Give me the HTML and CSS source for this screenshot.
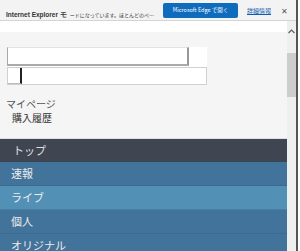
FILE: index.html
```html
<!DOCTYPE html>
<html lang="ja">
<head>
<meta charset="utf-8">
<title>マイページ</title>
<link rel="stylesheet" href="styles.css">
</head>
<body>
<div class="window">
  <div class="main">
    <div class="infobar">
      <span class="msg"><span class="ie">Internet Explorer モ</span><span class="jp">ードになっています。ほとんどのペ…</span></span>
      <span class="btn">Microsoft Edge で開く</span>
      <span class="link">詳細情報</span>
      <span class="close">✕</span>
    </div>
    <div class="viewport">
      <div class="page">
        <div class="header"></div>
        <div class="content">
          <div class="form">
            <div class="row1"><div class="field1"></div></div>
            <div class="field2"><div class="smallbtn"></div></div>
          </div>
          <div class="mypage">マイページ</div>
          <div class="history">購入履歴</div>
          <ul class="nav">
            <li class="dark">トップ</li>
            <li>速報</li>
            <li class="light">ライブ</li>
            <li>個人</li>
            <li>オリジナル</li>
          </ul>
        </div>
      </div>
      <div class="scrollbar">
        <div class="arrow">
          <svg width="7" height="5" viewBox="0 0 7 5"><path d="M0.5 4 L3.5 1 L6.5 4" fill="none" stroke="#606060" stroke-width="1.2"/></svg>
        </div>
        <div class="thumb"></div>
      </div>
    </div>
  </div>
  <div class="edge"></div>
</div>
</body>
</html>
```
FILE: styles.css
```css
html, body {
  margin: 0;
  padding: 0;
  width: 300px;
  height: 251px;
  overflow: hidden;
  background: #ffffff;
  font-family: "Noto Sans CJK JP", "Liberation Sans", sans-serif;
}
.window {
  display: flex;
  height: 251px;
}
.main {
  width: 296px;
  display: flex;
  flex-direction: column;
  overflow: hidden;
}
.edge {
  width: 2px;
  background: #555;
}
.infobar {
  flex-shrink: 0;
  height: 21px;
  box-sizing: border-box;
  background: #f3f3f3;
  border-bottom: 1px solid #d4d4d4;
  display: flex;
  align-items: center;
  padding-left: 6px;
  color: #222;
  white-space: nowrap;
}
.msg {
  width: 148px;
  margin-right: 9px;
}
.ie {
  font-family: "Liberation Sans", sans-serif;
  font-weight: bold;
  font-size: 6.5px;
  color: #333;
  margin-right: 3px;
}
.jp {
  font-size: 5px;
  color: #333;
}
.btn {
  flex-shrink: 0;
  width: 75px;
  height: 15px;
  background: #0f6cbd;
  color: #fff;
  border-radius: 2px;
  font-size: 5.5px;
  display: flex;
  align-items: center;
  justify-content: center;
}
.link {
  margin-left: 9px;
  color: #0f5bb0;
  text-decoration: underline;
  font-size: 6px;
}
.close {
  margin-left: 10px;
  color: #555;
  font-size: 8px;
}
.viewport {
  flex: 1;
  display: flex;
  min-height: 0;
  overflow: hidden;
}
.page {
  flex: 1;
  display: flex;
  flex-direction: column;
  background: #f5f5f5;
  overflow: hidden;
}
.header {
  flex-shrink: 0;
  height: 11px;
  background: #ffffff;
}
.content {
  flex-shrink: 0;
  padding-top: 15px;
}
.form {
  margin-left: 7px;
  width: 200px;
  background: #ffffff;
}
.row1 {
  height: 20px;
}
.field1 {
  width: 182px;
  height: 19px;
  box-sizing: border-box;
  border-top: 1px solid #e2e2e2;
  border-left: 1px solid #a8a8a8;
  border-right: 2px solid #999;
  border-bottom: 2px solid #aaa;
  background: #fff;
}
.field2 {
  width: 200px;
  height: 18px;
  box-sizing: border-box;
  border: 1px solid #d0d0d0;
  background: #fff;
}
.smallbtn {
  width: 14px;
  height: 16px;
  box-sizing: border-box;
  border-right: 2px solid #222;
  border-bottom: 1px solid #bbb;
}
.mypage {
  margin-top: 12px;
  margin-left: 6px;
  font-size: 10px;
  line-height: 13px;
  color: #555;
}
.history {
  margin-top: 1px;
  margin-left: 12px;
  font-size: 10px;
  line-height: 13px;
  color: #333;
}
.nav {
  list-style: none;
  margin: 14px 0 0 0;
  padding: 0;
  border-top: 1px solid #e0e0e0;
}
.nav li {
  height: 24px;
  box-sizing: border-box;
  padding-left: 11px;
  font-size: 11px;
  line-height: 23px;
  color: #ececec;
  background: #42739a;
  border-bottom: 1px solid #3d6a8e;
}
.nav li.dark {
  height: 23px;
  padding-left: 13px;
  background: #3f4551;
  border-bottom: 1px solid #3a4556;
  color: #e0e0e0;
}
.nav li.light {
  background: #5390b5;
  border-bottom: 1px solid #4a7ea3;
}
.scrollbar {
  flex-shrink: 0;
  width: 9px;
  background: #efefef;
  display: flex;
  flex-direction: column;
  align-items: center;
}
.arrow {
  height: 21px;
  display: flex;
  align-items: center;
  justify-content: center;
}
.thumb {
  margin-top: 11px;
  width: 9px;
  height: 44px;
  background: #cdcdcd;
}
```
